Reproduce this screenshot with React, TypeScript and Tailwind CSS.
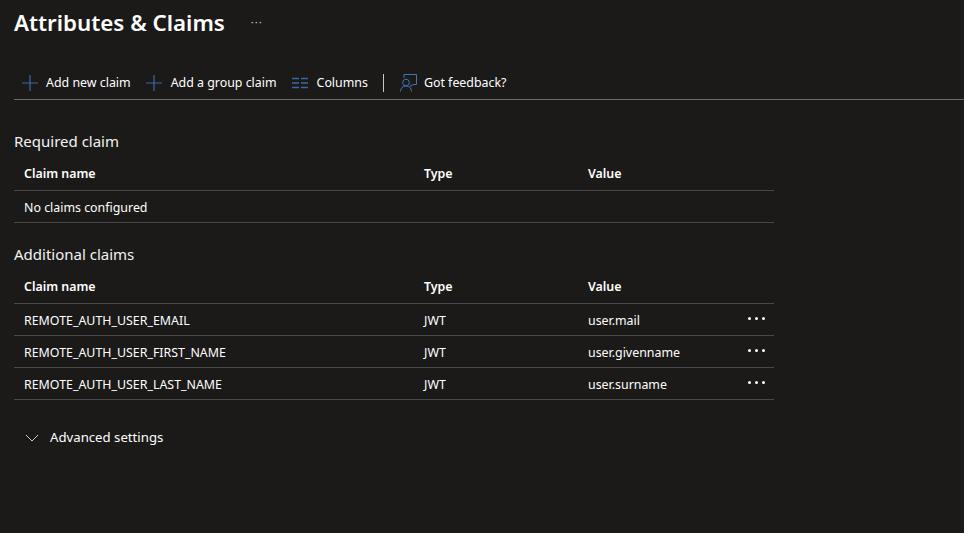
import React from "react";

const FONT = "font-['Noto_Sans','Open_Sans',sans-serif]";

const additional = [
  { name: "REMOTE_AUTH_USER_EMAIL", type: "JWT", value: "user.mail" },
  { name: "REMOTE_AUTH_USER_FIRST_NAME", type: "JWT", value: "user.givenname" },
  { name: "REMOTE_AUTH_USER_LAST_NAME", type: "JWT", value: "user.surname" },
];

function PlusIcon() {
  return (
    <svg width="16" height="16" viewBox="0 0 16 16" className="block">
      <path d="M8 0v16M0 8h16" stroke="#3a6aa3" strokeWidth="1.2" fill="none" />
    </svg>
  );
}

function ColumnsIcon() {
  return (
    <svg width="16" height="12" viewBox="0 0 16 12" className="block">
      <path
        d="M0 1.5h7M9 1.5h7M0 6h7M9 6h7M0 10.5h7M9 10.5h7"
        stroke="#3a6aa3"
        strokeWidth="1.3"
        fill="none"
      />
    </svg>
  );
}

function FeedbackIcon() {
  return (
    <svg width="17" height="18" viewBox="0 0 17 18" className="block">
      <path
        d="M4 4V0.5h12.5v10H13l-2 2v-2"
        stroke="#3f74b5"
        strokeWidth="1"
        fill="none"
      />
      <circle cx="6" cy="8.5" r="3.3" stroke="#3f74b5" strokeWidth="1" fill="none" />
      <path d="M0.5 17.5c0-3.5 2.4-5.5 5.5-5.5s5.5 2 5.5 5.5" stroke="#3f74b5" strokeWidth="1" fill="none" />
    </svg>
  );
}

function Dots() {
  return (
    <div className="flex gap-[4px] -translate-y-[3px]">
      <span className="w-[3px] h-[3px] rounded-full bg-white" />
      <span className="w-[3px] h-[3px] rounded-full bg-white" />
      <span className="w-[3px] h-[3px] rounded-full bg-white" />
    </div>
  );
}

function HeaderRow() {
  return (
    <div className="grid grid-cols-[400px_164px_1fr] pl-[10px] h-[39px] pt-[7px] items-center border-b border-[#484848] font-semibold">
      <span>Claim name</span>
      <span>Type</span>
      <span>Value</span>
    </div>
  );
}

export default function App() {
  return (
    <div className={`${FONT} w-[964px] h-[533px] overflow-hidden bg-[#1b1a19] text-white text-[12.4px]`}>
      <div className="flex items-center pl-[14px] pt-[6px] h-[40px]">
        <h1 className="text-[22.3px] font-semibold leading-[34px]">Attributes &amp; Claims</h1>
        <span className="ml-[26px] text-[11px] text-[#c8c8c8] tracking-[1px] -translate-y-[1px]">···</span>
      </div>

      <div className="ml-[14px] mt-[20px] h-[40px] pt-[7px] flex items-center pl-[8px] border-b border-[#6a6a6a]">
        <PlusIcon />
        <span className="ml-[8px]">Add new claim</span>
        <span className="ml-[15px]"><PlusIcon /></span>
        <span className="ml-[9px]">Add a group claim</span>
        <span className="ml-[15px]"><ColumnsIcon /></span>
        <span className="ml-[9px]">Columns</span>
        <span className="ml-[15px] w-px h-[18px] bg-[#c8c8c8]" />
        <span className="ml-[16px]"><FeedbackIcon /></span>
        <span className="ml-[7px]">Got feedback?</span>
      </div>

      <div className="ml-[14px] w-[760px]">
        <h2 className="mt-[30px] text-[15px] leading-[22px] text-[#f3f2f1]">Required claim</h2>
        <HeaderRow />
        <div className="pl-[10px] h-[32px] pt-[3px] flex items-center border-b border-[#484848]">No claims configured</div>

        <h2 className="mt-[20px] text-[15px] leading-[22px] text-[#f3f2f1]">Additional claims</h2>
        <HeaderRow />
        {additional.map((row) => (
          <div
            key={row.name}
            className="grid grid-cols-[400px_164px_1fr_auto] pl-[10px] pr-[9px] h-[32px] pt-[3px] items-center border-b border-[#484848]"
          >
            <span>{row.name}</span>
            <span>{row.type}</span>
            <span>{row.value}</span>
            <Dots />
          </div>
        ))}

        <div className="mt-[28px] pl-[11px] flex items-center h-[20px]">
          <svg width="14" height="8" viewBox="0 0 14 8" className="block">
            <path d="M1 1l6 6 6-6" stroke="#c8c8c8" strokeWidth="1" fill="none" />
          </svg>
          <span className="ml-[11px] text-[13.2px]">Advanced settings</span>
        </div>
      </div>
    </div>
  );
}
